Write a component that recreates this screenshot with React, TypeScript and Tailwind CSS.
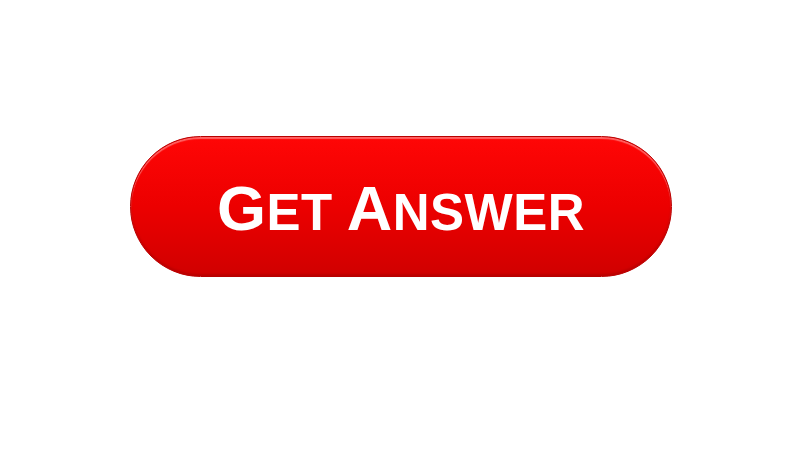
import React from "react";

// one caps word: first letter full size, the rest set smaller
const CapsWord = ({ word }: { word: string }) => (
  <span>
    <span className="text-[63px]">{word[0]}</span>
    <span className="text-[51px]">{word.slice(1)}</span>
  </span>
);

const App = () => {
  return (
    <div className="w-[800px] h-[450px] bg-white flex justify-center pt-[136px]">
      <button
        type="button"
        className="w-[542px] h-[141px] ml-[2px] rounded-full border border-[#b80000] bg-gradient-to-b from-[#ff0606] via-[#ec0000] to-[#d00000] shadow-[inset_0_2px_1px_rgba(255,140,140,0.7),inset_0_-2px_2px_rgba(150,0,0,0.35)] flex items-center justify-center"
      >
        <span
          className="flex items-baseline gap-[14px] font-bold text-white leading-none tracking-[0.5px] mt-[3px]"
          style={{ fontFamily: '"Liberation Sans", Arial, sans-serif' }}
        >
          <CapsWord word="GET" />
          <CapsWord word="ANSWER" />
        </span>
      </button>
    </div>
  );
};

export default App;
